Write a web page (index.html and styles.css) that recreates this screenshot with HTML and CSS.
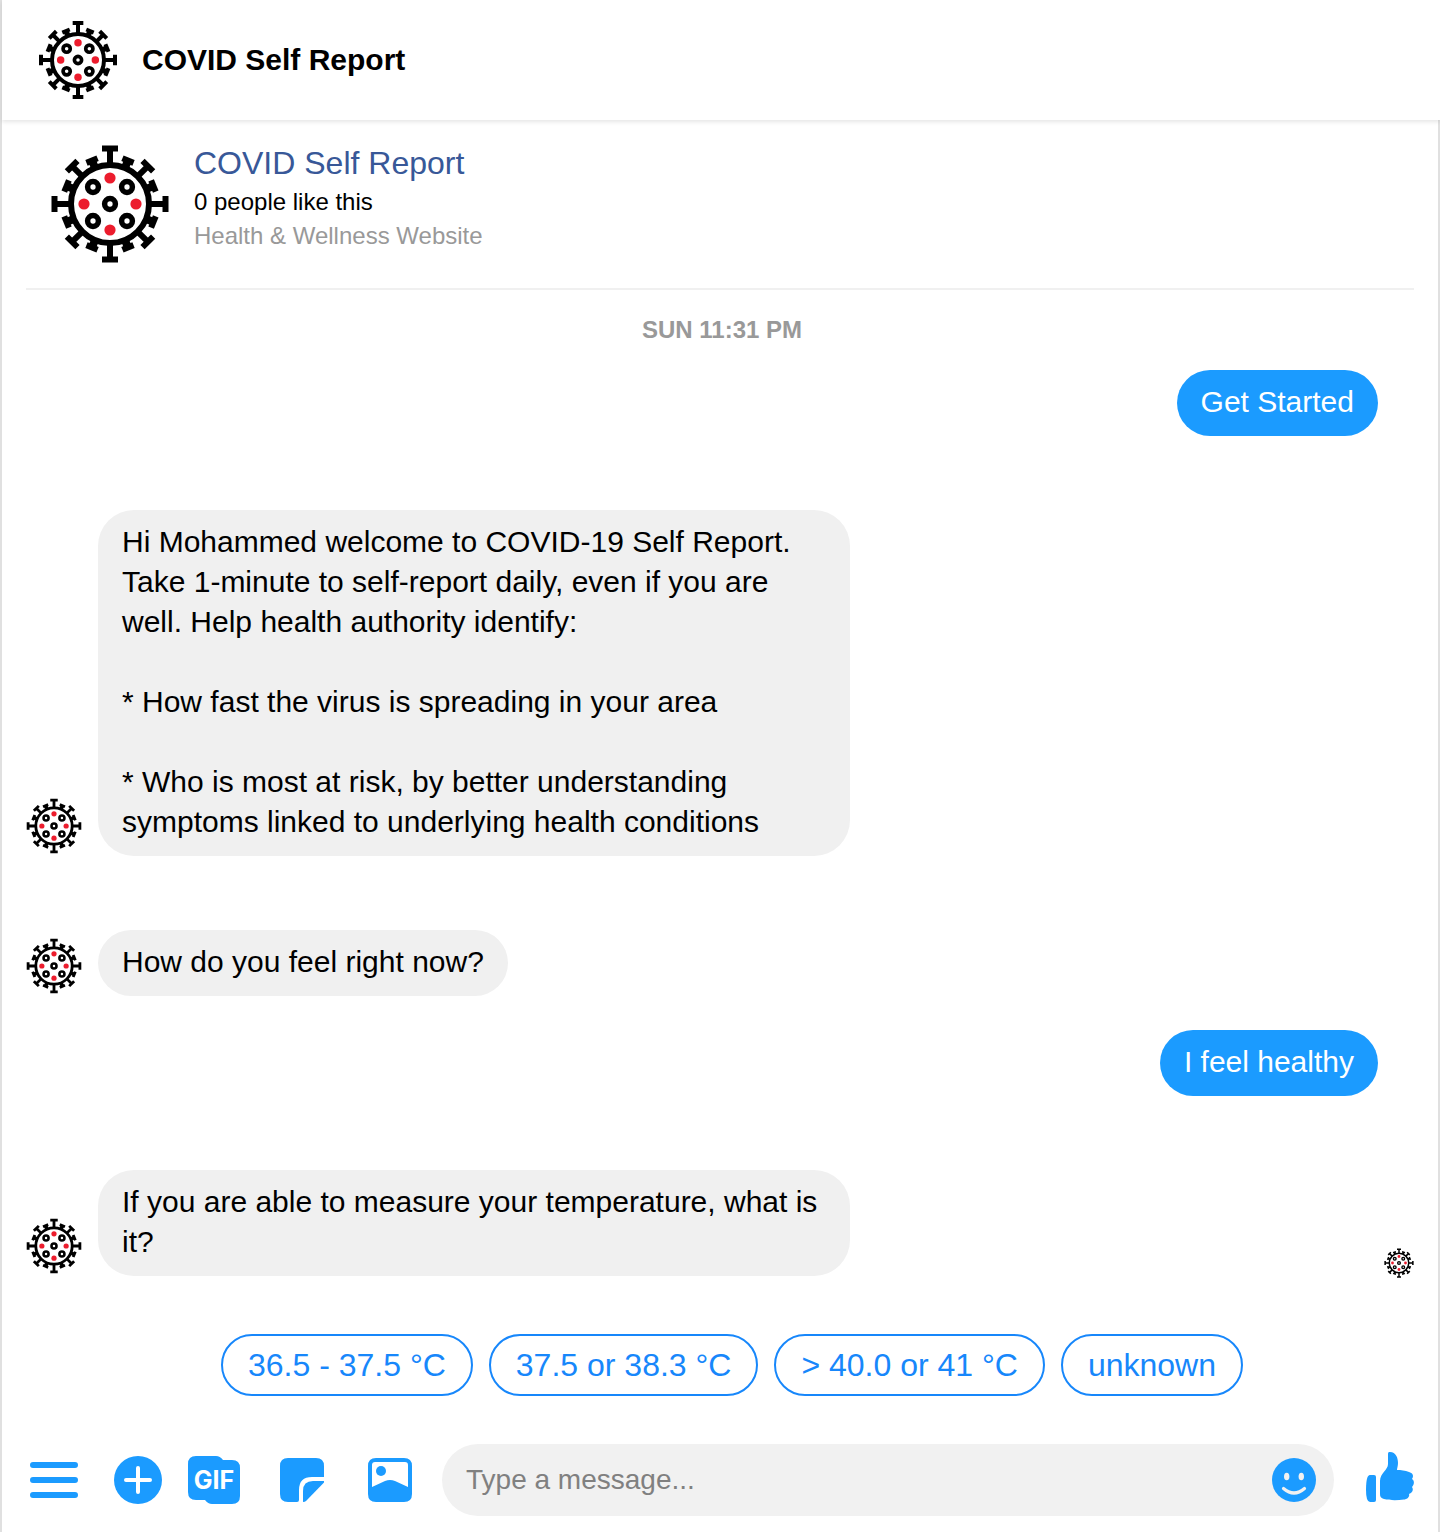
FILE: index.html
```html
<!DOCTYPE html>
<html lang="en">
<head>
<meta charset="utf-8">
<meta name="viewport" content="width=device-width, initial-scale=1">
<title>COVID Self Report</title>
<link rel="stylesheet" href="styles.css">
</head>
<body>
<svg class="sprite" aria-hidden="true">
  <symbol id="virus" viewBox="0 0 120 120">
    <defs>
      <path id="spike" d="M60 21V5M52 4.500H68"/>
      <path id="arm" d="M60 21V7M52.500 6.500H67.500"/>
      <g id="stub"><path d="M60 20V14" stroke-width="8"/><path d="M54 13H66" stroke-width="6"/></g>
    </defs>
    <g fill="none" stroke="#000" stroke-width="6">
      <circle cx="60" cy="60" r="39"/>
      <use href="#spike"/>
      <use href="#arm" transform="rotate(45 60 60)"/>
      <use href="#spike" transform="rotate(90 60 60)"/>
      <use href="#arm" transform="rotate(135 60 60)"/>
      <use href="#spike" transform="rotate(180 60 60)"/>
      <use href="#arm" transform="rotate(225 60 60)"/>
      <use href="#spike" transform="rotate(270 60 60)"/>
      <use href="#arm" transform="rotate(315 60 60)"/>
      <use href="#stub" transform="rotate(22.500 60 60)"/>
      <use href="#stub" transform="rotate(67.500 60 60)"/>
      <use href="#stub" transform="rotate(112.500 60 60)"/>
      <use href="#stub" transform="rotate(157.500 60 60)"/>
      <use href="#stub" transform="rotate(202.500 60 60)"/>
      <use href="#stub" transform="rotate(247.500 60 60)"/>
      <use href="#stub" transform="rotate(292.500 60 60)"/>
      <use href="#stub" transform="rotate(337.500 60 60)"/>
      <g stroke-width="5.500">
        <circle cx="60" cy="60" r="5.400"/>
        <circle cx="43" cy="43" r="5.400"/>
        <circle cx="77" cy="43" r="5.400"/>
        <circle cx="43" cy="77" r="5.400"/>
        <circle cx="77" cy="77" r="5.400"/>
      </g>
    </g>
    <g fill="#ec1c2d">
      <circle cx="60" cy="34" r="5.600"/>
      <circle cx="60" cy="86" r="5.600"/>
      <circle cx="34" cy="60" r="5.600"/>
      <circle cx="86" cy="60" r="5.600"/>
    </g>
  </symbol>
</svg>
<div class="app">
  <header class="topbar">
    <svg class="avatar avatar-header" aria-hidden="true"><use href="#virus"/></svg>
    <h1>COVID Self Report</h1>
  </header>
  <main class="thread">
    <section class="profile">
      <svg class="avatar avatar-profile" aria-hidden="true"><use href="#virus"/></svg>
      <div class="profile-text">
        <a href="#">COVID Self Report</a>
        <p>0 people like this</p>
        <p class="muted">Health &amp; Wellness Website</p>
      </div>
    </section>
    <time class="stamp">SUN 11:31 PM</time>
    <div class="row sent"><p class="bubble">Get Started</p></div>
    <div class="row received spaced">
      <svg class="avatar avatar-row" aria-hidden="true"><use href="#virus"/></svg>
      <p class="bubble">Hi Mohammed welcome to COVID-19 Self Report. Take 1-minute to self-report daily, even if you are<br>well. Help health authority identify:<br><br>* How fast the virus is spreading in your area<br><br>* Who is most at risk, by better understanding symptoms linked to underlying health conditions</p>
    </div>
    <div class="row received spaced">
      <svg class="avatar avatar-row" aria-hidden="true"><use href="#virus"/></svg>
      <p class="bubble">How do you feel right now?</p>
    </div>
    <div class="row sent reply"><p class="bubble">I feel healthy</p></div>
    <div class="row received spaced">
      <svg class="avatar avatar-row" aria-hidden="true"><use href="#virus"/></svg>
      <p class="bubble">If you are able to measure your temperature, what is it?</p>
      <svg class="avatar avatar-seen" aria-hidden="true"><use href="#virus"/></svg>
    </div>
    <div class="chips">
      <button type="button">36.5 - 37.5 °C</button>
      <button type="button">37.5 or 38.3 °C</button>
      <button type="button">&gt; 40.0 or 41 °C</button>
      <button type="button">unknown</button>
    </div>
  </main>
  <form class="composer">
    <div class="tools">
      <button class="icon" type="button" aria-label="Menu">
        <svg width="48" height="48" viewBox="0 0 48 48"><path d="M3 9H45M3 24H45M3 39H45" stroke="currentColor" stroke-width="6" stroke-linecap="round"/></svg>
      </button>
      <button class="icon menu-gap" type="button" aria-label="More actions">
        <svg width="48" height="48" viewBox="0 0 48 48"><circle cx="24" cy="24" r="24" fill="currentColor"/><path d="M12 24H36M24 12V36" stroke="#fff" stroke-width="4" stroke-linecap="round"/></svg>
      </button>
      <button class="icon gif-gap" type="button" aria-label="GIF">
        <svg width="52" height="48" viewBox="0 0 52 48"><path d="M8 0H28Q32 0 35 4H44Q52 4 52 12V40Q52 48 44 48H24Q20 48 17 44H8Q0 44 0 36V8Q0 0 8 0Z" fill="currentColor"/><text class="gif" x="26" y="33" text-anchor="middle">GIF</text></svg>
      </button>
      <button class="icon wide-gap" type="button" aria-label="Stickers">
        <svg width="44" height="44" viewBox="0 0 44 44" fill="currentColor"><path d="M8 0H36Q44 0 44 8V19H32Q19 19 19 32V42Q19 44 17 44H8Q0 44 0 36V8Q0 0 8 0Z"/><path d="M33 23H44V24.500L26 43Q25 44 23 44V33Q23 23 33 23Z"/></svg>
      </button>
      <button class="icon photo-gap" type="button" aria-label="Photo">
        <svg width="44" height="44" viewBox="0 0 44 44" fill="currentColor"><path fill-rule="evenodd" d="M8 0H36Q44 0 44 8V36Q44 44 36 44H8Q0 44 0 36V8Q0 0 8 0ZM7 4Q4 4 4 7V29L17 23Q22 21 27 23L40 29V7Q40 4 37 4Z"/><circle cx="13" cy="13" r="5"/></svg>
      </button>
    </div>
    <div class="field">
      <input type="text" placeholder="Type a message..." aria-label="Type a message">
      <button class="icon" type="button" aria-label="Emoji">
        <svg width="44" height="44" viewBox="0 0 44 44"><circle cx="22" cy="22" r="22" fill="currentColor"/><g fill="#f1f1f1"><ellipse cx="14.700" cy="18.500" rx="2.700" ry="3.800"/><ellipse cx="29.300" cy="18.500" rx="2.700" ry="3.800"/></g><path d="M11.500 30.500Q22 39.500 32.500 30.500" fill="none" stroke="#f1f1f1" stroke-width="3.200" stroke-linecap="round"/></svg>
      </button>
    </div>
    <button class="icon like" type="button" aria-label="Like">
      <svg width="48" height="50" viewBox="0 0 48 50" fill="currentColor"><path d="M4 23H8Q10 23 10 25V48Q10 50 8 50H4Q0 50 0 38Q0 23 4 23Z"/><path d="M14 29C14 21 22 18 22 12V2C22 0 23 0 24 0C30 0 32 6 32 11C32 14 31 16 31 18C35 18 39 18.500 43 20C47 21 48 24 46 27C49 29 48 33 46 35C48 38 46 41 43 42C44 45 41 47 38 47.500C31 48.500 24 48.500 18 47C15 46 14 45 14 42Z"/></svg>
    </button>
  </form>
</div>
</body>
</html>
```
FILE: styles.css
```css
* { box-sizing: border-box; }

body {
  margin: 0;
  background: #fff;
  color: #000;
  font-family: "Liberation Sans", Arial, sans-serif;
  font-size: 30px;
  line-height: 40px;
}

h1, p { margin: 0; }

button, input { font: inherit; }

.sprite { position: absolute; width: 0; height: 0; }

.app {
  display: flex;
  flex-direction: column;
  min-height: 100vh;
  border-left: 2px solid #e0e0e0;
}

.avatar { flex: none; }

.topbar {
  display: flex;
  align-items: center;
  gap: 24px;
  height: 120px;
  padding: 0 36px;
  box-shadow: 0 2px 4px rgba(0, 0, 0, 0.1);
  z-index: 1;
}

.topbar h1 { font-size: 30px; line-height: 40px; }

.avatar-header { width: 80px; height: 80px; }

.thread {
  flex: 1;
  display: flex;
  flex-direction: column;
  padding: 0 24px;
  border-right: 2px solid #e0e0e0;
}

.profile {
  display: flex;
  gap: 24px;
  padding: 24px;
  border-bottom: 2px solid #f0f0f0;
}

.avatar-profile { width: 120px; height: 120px; }

.profile-text { font-size: 24px; line-height: 34px; }

.profile-text a {
  display: block;
  margin-bottom: 3px;
  color: #385898;
  font-size: 32px;
  line-height: 38px;
  text-decoration: none;
}

.muted { color: #999; }

.stamp {
  margin: 20px 0;
  padding-left: 4px;
  color: #999;
  font-size: 24px;
  font-weight: bold;
  text-align: center;
}

.row { display: flex; align-items: flex-end; }

.sent { justify-content: flex-end; padding-right: 36px; }

.received { gap: 16px; }

.spaced { margin-top: 74px; }

.reply { margin-top: 34px; }

.bubble {
  max-width: 752px;
  padding: 12px 24px 14px;
  border-radius: 36px;
  background: #f0f0f0;
}

.sent .bubble { background: #1b9bff; color: #fff; }

.avatar-row { width: 56px; height: 56px; margin-bottom: 2px; }

.avatar-seen { width: 30px; height: 30px; margin: 0 0 -2px auto; }

.chips {
  display: flex;
  flex-wrap: wrap;
  justify-content: center;
  gap: 16px;
  padding: 58px 0 24px 24px;
}

.chips button {
  height: 62px;
  padding: 0 25px;
  border: 2px solid #1787fb;
  border-radius: 31px;
  background: #fff;
  color: #1787fb;
  font-size: 32px;
}

.composer {
  display: flex;
  align-items: center;
  padding: 24px 24px 16px 28px;
  border-right: 2px solid #e0e0e0;
}

.tools { display: flex; align-items: center; }

.icon {
  display: block;
  flex: none;
  padding: 0;
  border: 0;
  background: none;
  color: #1b9bff;
}

.icon svg { display: block; }

.menu-gap { margin-left: 36px; }
.gif-gap { margin-left: 26px; }
.wide-gap { margin-left: 40px; }
.photo-gap { margin-left: 44px; }

.gif {
  fill: #fff;
  font-family: Inter, sans-serif;
  font-size: 25px;
  font-weight: 700;
}

.field {
  flex: 1;
  display: flex;
  align-items: center;
  height: 72px;
  margin: 0 32px 0 30px;
  padding: 0 18px 0 24px;
  border-radius: 36px;
  background: #f1f1f1;
}

.field input {
  flex: 1;
  min-width: 0;
  padding: 0;
  border: 0;
  outline: 0;
  background: none;
  font-size: 28px;
}

.field input::placeholder { color: #808080; opacity: 1; }

.like { margin-bottom: 6px; }
```
